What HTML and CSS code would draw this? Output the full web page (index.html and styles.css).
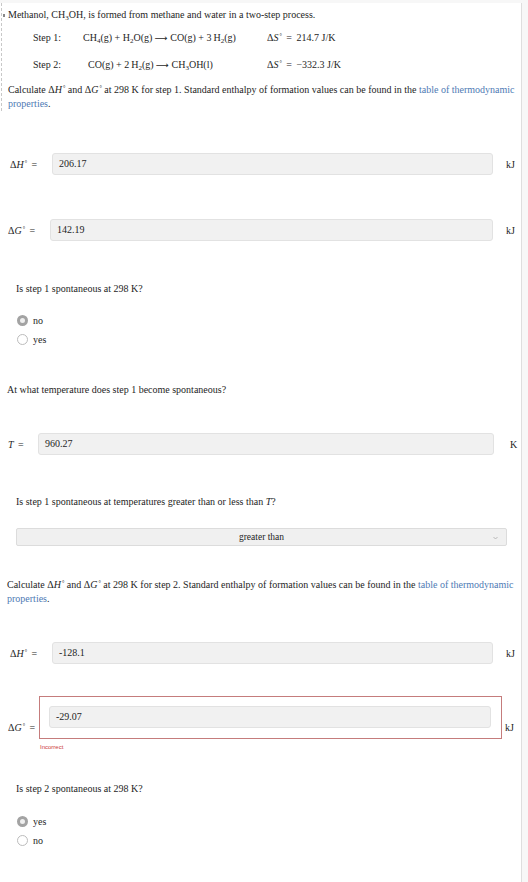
FILE: index.html
```html
<!DOCTYPE html>
<html>
<head>
<meta charset="utf-8">
<link rel="stylesheet" href="styles.css">
</head>
<body>
<div class="page">
  <div class="intro-wrap">
    <span class="qmark"></span>
    <p class="intro">Methanol, CH<sub>3</sub>OH, is formed from methane and water in a two-step process.</p>
    <div class="steps">
      <div class="step">
        <span class="step-name">Step 1:</span>
        <span class="eq eq1">CH<sub>4</sub>(g) + H<sub>2</sub>O(g) <span class="arrow">⟶</span> CO(g) + 3&#8201;H<sub>2</sub>(g)</span>
        <span class="ds">Δ<i>S</i><span class="deg">&#176;</span> <span class="eqs">=</span> 214.7 J/K</span>
      </div>
      <div class="step">
        <span class="step-name">Step 2:</span>
        <span class="eq eq2">CO(g) + 2&#8201;H<sub>2</sub>(g) <span class="arrow">⟶</span> CH<sub>3</sub>OH(l)</span>
        <span class="ds">Δ<i>S</i><span class="deg">&#176;</span> <span class="eqs">=</span> −332.3 J/K</span>
      </div>
    </div>
    <p class="calc calc1">Calculate Δ<i>H</i><span class="deg">&#176;</span> and Δ<i>G</i><span class="deg">&#176;</span> at 298 K for step 1. Standard enthalpy of formation values can be found in the <span class="link">table of thermodynamic</span> <span class="link">properties</span>.</p>
  </div>

  <div class="row row-h1">
    <span class="lbl lbl-h">Δ<i>H</i><span class="deg">&#176;</span> <span class="eqs">=</span></span>
    <div class="field">206.17</div>
    <span class="unit">kJ</span>
  </div>

  <div class="row row-g1">
    <span class="lbl lbl-g">Δ<i>G</i><span class="deg">&#176;</span> <span class="eqs">=</span></span>
    <div class="field">142.19</div>
    <span class="unit">kJ</span>
  </div>

  <p class="q q1">Is step 1 spontaneous at 298 K?</p>
  <div class="radios radios1">
    <div class="radio"><span class="dot on"></span>no</div>
    <div class="radio"><span class="dot"></span>yes</div>
  </div>

  <p class="plain q-temp">At what temperature does step 1 become spontaneous?</p>

  <div class="row row-t">
    <span class="lbl lbl-t"><i>T</i> <span class="eqs">=</span></span>
    <div class="field">960.27</div>
    <span class="unit unit-k">K</span>
  </div>

  <p class="q q2">Is step 1 spontaneous at temperatures greater than or less than <i>T</i>?</p>
  <div class="select">
    <span>greater than</span>
    <svg class="caret" width="5" height="4" viewBox="0 0 5 4"><path d="M0.5 1 L2.5 3 L4.5 1" fill="none" stroke="#aaa" stroke-width="0.8"/></svg>
  </div>

  <p class="calc calc2">Calculate Δ<i>H</i><span class="deg">&#176;</span> and Δ<i>G</i><span class="deg">&#176;</span> at 298 K for step 2. Standard enthalpy of formation values can be found in the <span class="link">table of thermodynamic</span> <span class="link">properties</span>.</p>

  <div class="row row-h2">
    <span class="lbl lbl-h">Δ<i>H</i><span class="deg">&#176;</span> <span class="eqs">=</span></span>
    <div class="field">-128.1</div>
    <span class="unit">kJ</span>
  </div>

  <div class="row row-g2">
    <span class="lbl lbl-g2">Δ<i>G</i><span class="deg">&#176;</span> <span class="eqs">=</span></span>
    <div class="wrong-box">
      <div class="field">-29.07</div>
    </div>
    <span class="unit unit-g2">kJ</span>
  </div>
  <div class="incorrect">Incorrect</div>

  <p class="q q3">Is step 2 spontaneous at 298 K?</p>
  <div class="radios radios2">
    <div class="radio"><span class="dot on"></span>yes</div>
    <div class="radio"><span class="dot"></span>no</div>
  </div>
</div>
</body>
</html>
```

FILE: styles.css
```css
html, body {
  margin: 0;
  padding: 0;
}
body {
  background: #f7f7f7;
  font-family: "Liberation Serif", "Times New Roman", serif;
  font-size: 10px;
  color: #1e1e1e;
  width: 528px;
  height: 882px;
  overflow: hidden;
}
p { margin: 0; }
sub {
  font-size: 7px;
  vertical-align: -2px;
  line-height: 1;
}
.deg {
  font-size: 6px;
  vertical-align: 3px;
  line-height: 1;
  margin-left: 1px;
}
.eqs { margin: 0 2px; }
.page {
  position: relative;
  width: 521px;
  height: 879px;
  margin-top: 3px;
  background: #fff;
  border-right: 1px solid #dedede;
}
.intro-wrap {
  position: relative;
  border-left: 1px dashed #c8c8c8;
  margin-left: 1px;
  padding-top: 5px;
}
.qmark {
  position: absolute;
  left: 1px;
  top: 11px;
  width: 2px;
  height: 3px;
  background: #888;
}
.intro {
  padding-left: 6px;
  line-height: 14px;
}
.steps {
  margin-top: 9px;
  display: flex;
  flex-direction: column;
  gap: 13px;
}
.step {
  display: flex;
  line-height: 14px;
}
.step-name {
  padding-left: 31px;
  width: 50px;
}
.eq { width: 184px; }
.eq2 { padding-left: 5px; width: 179px; }
.arrow { font-family: "DejaVu Sans", sans-serif; font-size: 9px; }
.ds { white-space: nowrap; }
.calc {
  line-height: 14px;
  padding-left: 6px;
  padding-right: 0;
}
.calc1 { margin-top: 11px; }
.calc2 { margin-top: 32px; padding-left: 7px; }
.link { color: #4e7ab4; }

.row {
  display: flex;
  align-items: center;
  padding-left: 10px;
}
.lbl { white-space: nowrap; }
.lbl-h { width: 42px; }
.lbl-t { width: 30px; }
.field {
  flex: 1;
  box-sizing: border-box;
  height: 22px;
  background: #f1f1f1;
  border: 1px solid #e2e2e2;
  border-radius: 3px;
  padding-left: 6px;
  line-height: 20px;
}
.unit {
  width: 28px;
  padding-left: 13px;
  box-sizing: border-box;
}
.unit-k { padding-left: 16px; width: 27px; }
.row-h1 { margin-top: 42px; }
.row-g1 { margin-top: 44px; padding-left: 8px; }
.lbl-g { width: 42px; }
.q {
  line-height: 14px;
  padding-left: 16px;
}
.q1 { margin-top: 41px; }
.radios {
  margin-top: 15px;
  padding-left: 17px;
}
.radio {
  display: flex;
  align-items: center;
  height: 19px;
}
.dot {
  width: 11px;
  height: 11px;
  box-sizing: border-box;
  border-radius: 50%;
  border: 1px solid #bcbcbc;
  background: #fff;
  margin-right: 5px;
}
.dot.on {
  border: 3px solid #a3a3a3;
  background: #efefef;
}
.plain {
  line-height: 14px;
  padding-left: 7px;
}
.q-temp { margin-top: 34px; }
.row-t { margin-top: 36px; padding-left: 8px; }
.q2 { margin-top: 40px; }
.select {
  position: relative;
  margin: 19px 14px 0 16px;
  height: 18px;
  box-sizing: border-box;
  background: #f0f0f0;
  border: 1px solid #dcdcdc;
  border-radius: 2px;
  text-align: center;
  line-height: 16px;
  font-size: 9.5px;
}
.caret {
  position: absolute;
  right: 8px;
  top: 7px;
}
.row-h2 { margin-top: 36px; }
.row-g2 {
  margin-top: 32px;
  align-items: flex-end;
  padding-left: 8px;
}
.lbl-g2 { width: 31px; padding-bottom: 6px; }
.wrong-box {
  flex: 1;
  display: flex;
  border: 1px solid #c57c7c;
  padding: 9px 10px 10px 9px;
}
.unit-g2 { width: 19px; padding-left: 3px; padding-bottom: 6px; }
.incorrect {
  font-family: "Liberation Sans", Arial, sans-serif;
  font-size: 6px;
  color: #cc3b3b;
  padding-left: 40px;
  margin-top: 4px;
  line-height: 8px;
}
.q3 { margin-top: 31px; }
.radios2 { margin-top: 16px; }
```
